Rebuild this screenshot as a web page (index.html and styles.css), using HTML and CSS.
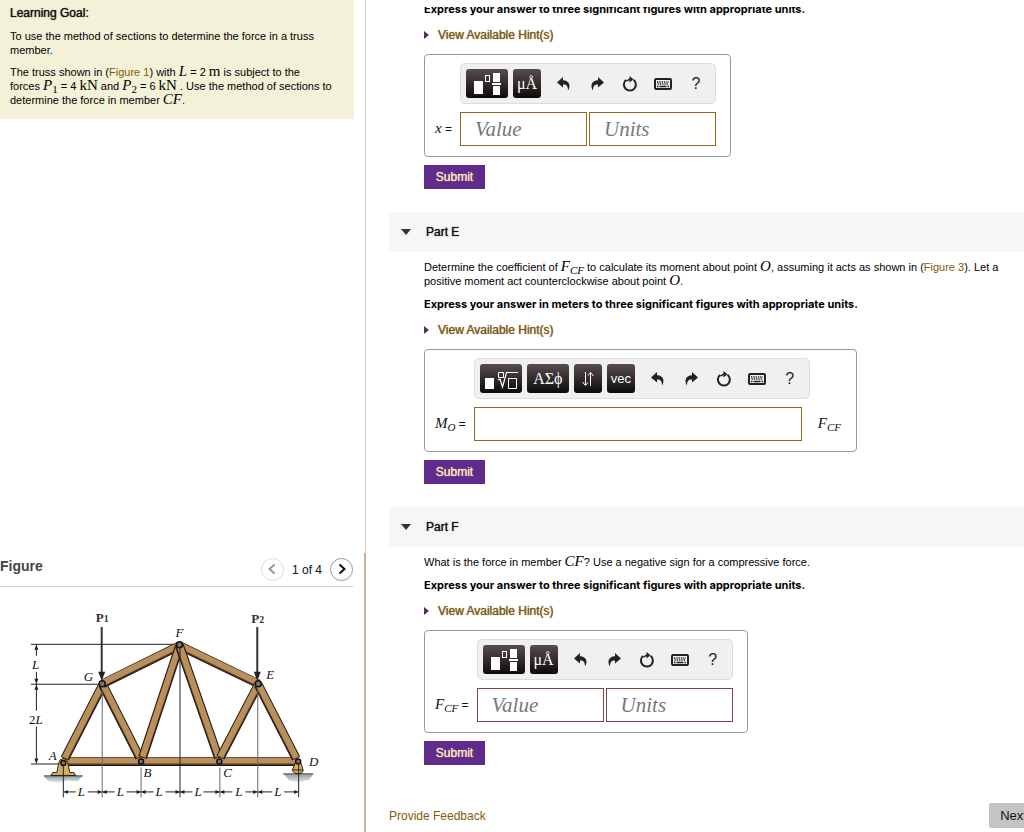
FILE: index.html
```html
<!DOCTYPE html>
<html lang="en">

<head>
  <meta charset="utf-8">
  <title>Method of Sections</title>
  <link rel="stylesheet" href="styles.css">
</head>

<body>
  <!-- Shared icons -->
  <svg class="icon-defs" aria-hidden="true">
    <symbol id="icon-undo" viewBox="0 0 14 14">
      <path d="M6 0L0 5.500L6 10.500V7.500C9.500 7.300 11 9 11 13.500C13.800 9.500 13 3.500 6 3.200Z"/>
    </symbol>
    <symbol id="icon-redo" viewBox="0 0 14 14">
      <path d="M8 0L14 5.500L8 10.500V7.500C4.500 7.300 3 9 3 13.500C0.200 9.500 1 3.500 8 3.200Z"/>
    </symbol>
    <symbol id="icon-reset" viewBox="0 0 16 16">
      <path d="M4 4A6 6 0 1 0 11.500 3.800" fill="none" stroke="currentColor" stroke-width="2"/>
      <path d="M3.500 4.800L7.500 2.500L7.500 0L11.500 3.200L7.500 6.500V4.300L5 5.500Z"/>
    </symbol>
    <symbol id="icon-keyboard" viewBox="0 0 18 12">
      <rect x="1" y="1" width="16" height="10" rx="1" fill="none" stroke="currentColor" stroke-width="2"/>
      <path d="M3 4H15M3.500 6H15" stroke="currentColor" stroke-width="1.300" stroke-dasharray="1.300 1"/>
      <path d="M3 8.500H4.500M5.500 8.500H12.500M13.500 8.500H15" stroke="currentColor" stroke-width="1.500"/>
    </symbol>
    <symbol id="icon-units-template" viewBox="0 0 28 24">
      <path d="M1 9H10V22H1ZM20 1H27V10H20ZM20 14H27V23H20ZM19 11H28V13H19Z"/>
      <rect x="12.500" y="3.500" width="4" height="6" fill="none" stroke="currentColor"/>
    </symbol>
    <symbol id="icon-root-template" viewBox="0 0 34 24">
      <path d="M1 11H10V22H1Z"/>
      <path d="M14.500 5.500H19.500V10.500H14.500ZM24.500 11.500H32.500V21.500H24.500Z" fill="none" stroke="currentColor"/>
      <path d="M14 13L16 12L18.500 20L22.500 5.500H34" fill="none" stroke="currentColor" stroke-width="1.200"/>
    </symbol>
    <symbol id="icon-arrows" viewBox="0 0 14 16">
      <path d="M4.500 1V14M1.500 11L4.500 14.500L7 11.500M9.500 15V2M7 4.500L9.500 1.500L12.500 5" fill="none" stroke="currentColor"/>
    </symbol>
  </svg>

  <div class="page">
    <aside class="sidebar">
      <section class="goal-pane">
        <div class="goal">
          <h2 class="goal-title">Learning Goal:</h2>
          <p>To use the method of sections to determine the force in a truss member.</p>
          <p>The truss shown in (<a href="#figure">Figure 1</a>) with <i class="math">L</i> = 2 <span class="math">m</span> is subject to the forces&nbsp;<i class="math">P</i><sub class="math">1</sub> = 4 <span class="math">kN</span> and <i class="math">P</i><sub class="math">2</sub> = 6 <span class="math">kN</span> . Use the method of sections to determine the force in member <i class="math">CF</i>.</p>
        </div>
      </section>

      <section class="figure-pane" id="figure">
        <div class="figure-bar">
          <h2>Figure</h2>
          <button class="round" disabled aria-label="Previous figure">
            <svg width="10" height="12" viewBox="0 0 10 12"><path d="M7.500 1.500L2.500 6L7.500 10.500"/></svg>
          </button>
          <span class="count">1 of 4</span>
          <button class="round" aria-label="Next figure">
            <svg width="10" height="12" viewBox="0 0 10 12"><path d="M2.500 1.500L7.500 6L2.500 10.500"/></svg>
          </button>
        </div>

        <svg class="truss" viewBox="0 587 354 245" role="img" aria-label="Truss with loads P1 and P2">
          <defs>
            <linearGradient id="ground" x1="0" y1="0" x2="0" y2="1">
              <stop offset="0" stop-color="#94a3a6"/>
              <stop offset="1" stop-color="#e6ebeb"/>
            </linearGradient>
            <path id="ad" d="M63 762H299"/>
            <path id="ag" d="M65 759L103 685"/>
            <path id="gb" d="M103 685L140 758"/>
            <path id="gf" d="M103 684L180 646"/>
            <path id="fb" d="M180 646L143 758"/>
            <path id="fe" d="M180 646L259 684"/>
            <path id="fc" d="M180 646L219 758"/>
            <path id="ec" d="M259 685L221 758"/>
            <path id="ed" d="M259 685L297 759"/>
          </defs>

          <!-- ground and dimension lines -->
          <path fill="url(#ground)" d="M44 777H82L78 782L68 781L61 783L49 782Z"/>
          <path fill="url(#ground)" d="M285 775H314L310 780L300 783L290 781Z"/>
          <path class="thin" d="M31 644.500H178M31 684.500H98M31 764.500H60M36.500 645V656M36.500 672V711M36.500 727V764"/>
          <path class="thin" d="M64 792.500H76M88 792.500H115M127 792.500H154M166 792.500H193M204 792.500H233M246 792.500H273M285 792.500H299"/>
          <path class="tips" d="M36.500 645l-2 5h4zM36.500 684l-2 -5h4zM36.500 685l-2 5h4zM36.500 764l-2 -5h4zM64 792.500l4 -2v4zM299 792.500l-4 -2v4z"/>
          <path class="tips" d="M98 790.500L102.500 792.500L98 794.500ZM107 790.500L102.500 792.500L107 794.500ZM137 790.500L141.500 792.500L137 794.500ZM146 790.500L141.500 792.500L146 794.500ZM176 790.500L180.500 792.500L176 794.500ZM185 790.500L180.500 792.500L185 794.500ZM216 790.500L220.500 792.500L216 794.500ZM225 790.500L220.500 792.500L225 794.500ZM254 790.500L258.500 792.500L254 794.500ZM263 790.500L258.500 792.500L263 794.500Z"/>

          <!-- members: outline, shaded underside, wood face -->
          <g class="member"><use href="#ad"/><use href="#ad"/><use href="#ad" y="-1"/></g>
          <g class="member"><use href="#ag"/><use href="#ag"/><use href="#ag" y="-1"/></g>
          <g class="member"><use href="#gb"/><use href="#gb"/><use href="#gb" y="-1"/></g>
          <g class="member"><use href="#gf"/><use href="#gf"/><use href="#gf" y="-1"/></g>
          <g class="member"><use href="#fe"/><use href="#fe"/><use href="#fe" y="-1"/></g>
          <g class="member"><use href="#fb"/><use href="#fb"/><use href="#fb" y="-1"/></g>
          <g class="member"><use href="#fc"/><use href="#fc"/><use href="#fc" y="-1"/></g>
          <g class="member"><use href="#ec"/><use href="#ec"/><use href="#ec" y="-1"/></g>
          <g class="member"><use href="#ed"/><use href="#ed"/><use href="#ed" y="-1"/></g>

          <!-- supports -->
          <path class="gold" d="M51 776L53 773H57L59 763Q60 759 63.500 759Q67 759 68 763L70 773H74L76 776Z"/>
          <path class="gold" d="M296 764Q299 757 302 764L304 771Q303 774.500 299 774.500Q295 774.500 293 771Z"/>
          <path class="thin" d="M44 776.500H83M284 774.500H314M294 770.500H304"/>
          <path class="thin gray" d="M102.500 690V798M258.500 690V798M141.500 768V798M220.500 768V798"/>
          <path class="thin" d="M63.500 766V798M180.500 646V798M299.500 764V798"/>
          <g class="pin">
            <circle cx="63.500" cy="763.500" r="2.500"/><circle cx="141.500" cy="762" r="2.500"/>
            <circle cx="220" cy="762" r="2.500"/><circle cx="299" cy="762" r="2.500"/>
            <circle cx="102.500" cy="684" r="3"/><circle cx="259" cy="684" r="3"/><circle cx="180" cy="645" r="3"/>
          </g>

          <!-- loads -->
          <path class="load" d="M102 627V674M258 627V674"/>
          <path class="tips" d="M98.500 672H105.500L102 681ZM254.500 672H261.500L258 681Z"/>

          <g class="force">
            <text x="96" y="622">P<tspan class="small">1</tspan></text>
            <text x="252" y="623">P<tspan class="small">2</tspan></text>
          </g>
          <g class="joint">
            <text x="176" y="637">F</text><text x="84" y="681">G</text><text x="267" y="679">E</text>
            <text x="49" y="761">A</text><text x="144" y="778">B</text><text x="224" y="778">C</text>
            <text x="310" y="767">D</text><text x="32" y="669">L</text>
            <text x="29" y="724"><tspan class="upright">2</tspan>L</text>
            <text x="78" y="797">L</text><text x="117" y="797">L</text><text x="156" y="797">L</text>
            <text x="195" y="797">L</text><text x="236" y="797">L</text><text x="275" y="797">L</text>
          </g>
        </svg>
      </section>
    </aside>

    <main class="content">
      <section class="part part-cut">
        <p class="ask">Express your answer to three significant figures with appropriate units.</p>
        <button class="hint">View Available Hint(s)</button>
        <form class="answer">
          <div class="toolbar">
            <button type="button" class="key wide" aria-label="Templates"><svg width="28" height="24"><use href="#icon-units-template"/></svg></button>
            <button type="button" class="key serif">μÅ</button>
            <button type="button" class="tool" aria-label="Undo"><svg width="14" height="14"><use href="#icon-undo"/></svg></button>
            <button type="button" class="tool" aria-label="Redo"><svg width="14" height="14"><use href="#icon-redo"/></svg></button>
            <button type="button" class="tool" aria-label="Reset"><svg width="16" height="16"><use href="#icon-reset"/></svg></button>
            <button type="button" class="tool" aria-label="Keyboard"><svg width="18" height="12"><use href="#icon-keyboard"/></svg></button>
            <button type="button" class="tool">?</button>
          </div>
          <label for="xValue"><i class="math">x</i> =</label>
          <div class="fields">
            <input type="text" id="xValue" placeholder="Value">
            <input type="text" placeholder="Units" aria-label="Units">
          </div>
        </form>
        <button class="submit">Submit</button>
      </section>

      <h2 class="part-title">Part E</h2>
      <section class="part">
        <p>Determine the coefficient of <i class="math">F</i><sub class="math"><i>CF</i></sub> to calculate its moment about point <i class="math">O</i>, assuming it acts as shown in (<a href="#figure">Figure 3</a>). Let a positive moment act counterclockwise about point <i class="math">O</i>.</p>
        <p class="ask">Express your answer in meters to three significant figures with appropriate units.</p>
        <button class="hint">View Available Hint(s)</button>
        <form class="answer">
          <div class="toolbar">
            <button type="button" class="key wide" aria-label="Templates"><svg width="34" height="24"><use href="#icon-root-template"/></svg></button>
            <button type="button" class="key wide serif">ΑΣϕ</button>
            <button type="button" class="key" aria-label="Arrows"><svg width="14" height="16"><use href="#icon-arrows"/></svg></button>
            <button type="button" class="key">vec</button>
            <button type="button" class="tool" aria-label="Undo"><svg width="14" height="14"><use href="#icon-undo"/></svg></button>
            <button type="button" class="tool" aria-label="Redo"><svg width="14" height="14"><use href="#icon-redo"/></svg></button>
            <button type="button" class="tool" aria-label="Reset"><svg width="16" height="16"><use href="#icon-reset"/></svg></button>
            <button type="button" class="tool" aria-label="Keyboard"><svg width="18" height="12"><use href="#icon-keyboard"/></svg></button>
            <button type="button" class="tool">?</button>
          </div>
          <label for="moment"><i class="math">M</i><sub class="math"><i>O</i></sub> =</label>
          <div class="fields single"><input type="text" id="moment"></div>
          <span class="suffix"><i class="math">F</i><sub class="math"><i>CF</i></sub></span>
        </form>
        <button class="submit">Submit</button>
      </section>

      <h2 class="part-title">Part F</h2>
      <section class="part">
        <p>What is the force in member <i class="math">CF</i>? Use a negative sign for a compressive force.</p>
        <p class="ask">Express your answer to three significant figures with appropriate units.</p>
        <button class="hint">View Available Hint(s)</button>
        <form class="answer">
          <div class="toolbar">
            <button type="button" class="key wide" aria-label="Templates"><svg width="28" height="24"><use href="#icon-units-template"/></svg></button>
            <button type="button" class="key serif">μÅ</button>
            <button type="button" class="tool" aria-label="Undo"><svg width="14" height="14"><use href="#icon-undo"/></svg></button>
            <button type="button" class="tool" aria-label="Redo"><svg width="14" height="14"><use href="#icon-redo"/></svg></button>
            <button type="button" class="tool" aria-label="Reset"><svg width="16" height="16"><use href="#icon-reset"/></svg></button>
            <button type="button" class="tool" aria-label="Keyboard"><svg width="18" height="12"><use href="#icon-keyboard"/></svg></button>
            <button type="button" class="tool">?</button>
          </div>
          <label for="force"><i class="math">F</i><sub class="math"><i>CF</i></sub> =</label>
          <div class="fields red">
            <input type="text" id="force" placeholder="Value">
            <input type="text" placeholder="Units" aria-label="Units">
          </div>
        </form>
        <button class="submit">Submit</button>
      </section>

      <footer class="bottom">
        <a href="#feedback">Provide Feedback</a>
        <button class="next">Next</button>
      </footer>
    </main>
  </div>
</body>

</html>
```
FILE: styles.css
```css
* {box-sizing: border-box;}

body {
  margin: 0;
  background: #fff;
  color: #111;
  font: 12px/14px "Liberation Sans", Arial, sans-serif;
}

h2, p {margin: 0;}
p {color: #000; font-size: 11px;}
a {color: #84590a; text-decoration: none;}

button {
  padding: 0;
  border: 0;
  background: none;
  color: inherit;
  font: inherit;
  cursor: pointer;
}

svg {display: block; fill: currentColor;}
.icon-defs {display: none;}

.page {
  display: flex;
  min-height: 100vh;
  overflow: hidden;
}

/* Left side */
.sidebar {
  display: flex;
  flex: 0 0 366px;
  flex-direction: column;
}

.goal-pane {
  flex: 1;
  padding-right: 11px;
  border-right: 1px solid #ddd0c8;
}

.goal {
  padding: 6px 10px 12px;
  background: #f3f2d9;
}

.goal p {margin-top: 8px;}
.goal-title + p {margin-top: 9px;}

.goal-title,
.part-title,
.hint {
  font-size: 12px;
  font-weight: normal;
  text-shadow: 0 0 1px currentColor;
}

.math {
  font-family: "Liberation Serif", serif;
  font-size: 15px;
  line-height: 0;
}

sub.math {
  font-size: 11px;
  vertical-align: -3px;
}

.figure-pane {
  padding: 0 11px 1px 0;
  border-right: 2px solid #cfae98;
}

.figure-bar {
  display: flex;
  align-items: center;
  height: 34px;
  border-bottom: 1px solid #ccc;
}

.figure-bar h2 {
  flex: 1;
  margin-bottom: 6px;
  color: #444;
  font-size: 14px;
  font-weight: bold;
}

.count {margin: 2px 8px 0;}

.round {
  display: flex;
  align-items: center;
  justify-content: center;
  width: 23px;
  height: 23px;
  border: 1px solid #999;
  border-radius: 50%;
}

.round:disabled {border-color: #ddd; color: #999;}

.round path {
  fill: none;
  stroke: currentColor;
  stroke-width: 2;
}

/* Truss drawing */
.truss {width: 100%;}
.thin {fill: none; stroke: #222;}
.gray {stroke: #666;}
.tips {fill: #222;}
.load {stroke: #333; stroke-width: 2;}
.member {fill: none; stroke: #1c1814; stroke-width: 9;}
.member use:nth-child(2) {stroke: #5a3826; stroke-width: 7;}
.member use:nth-child(3) {stroke: #ba905a; stroke-width: 6;}
.gold {fill: #d6ad5c; stroke: #2b2212;}
.pin {fill: #777; stroke: #111; stroke-width: 1.5;}

.force,
.joint {
  font-family: "Liberation Serif", serif;
  font-size: 13px;
}

.force {font-weight: bold; fill: #333;}
.force .small {font-size: 10px;}
.joint {font-style: italic;}
.joint .upright {font-style: normal;}

/* Right side */
.content {
  flex: 1;
  min-width: 0;
  padding: 7px 0 0 23px;
}

.part {padding: 8px 4px 23px 35px;}

.part .ask {
  margin-top: 9px;
  font-family: Inter, "Liberation Sans", sans-serif;
  font-weight: bold;
}

/* The first part is scrolled under the top edge */
.part-cut {padding-top: 0; overflow: hidden;}
.part-cut .ask {margin-top: -5px;}

.part-title {
  display: flex;
  align-items: center;
  gap: 15px;
  height: 40px;
  padding-left: 12px;
  background: #f6f6f6;
}

.part-title::before {
  border: 5px solid transparent;
  border-top: 6px solid #333;
  border-bottom: 0;
  content: "";
}

.hint {
  display: flex;
  align-items: center;
  gap: 9px;
  margin: 12px 0;
  color: #7c581b;
}

.hint::before {
  border: 4px solid transparent;
  border-right: 0;
  border-left: 5px solid #5b2c60;
  content: "";
}

.answer {
  display: inline-grid;
  grid-template-columns: auto auto auto;
  gap: 8px;
  align-items: center;
  padding: 8px 6px 10px 10px;
  border: 1px solid #999;
  border-radius: 4px;
  vertical-align: top;
}

.toolbar {
  display: flex;
  grid-column: 2;
  gap: 5px;
  align-items: center;
  height: 41px;
  padding: 0 5px;
  border: 1px solid #ddd;
  border-radius: 5px;
  background: #f0f0f0;
}

.key,
.tool {
  display: flex;
  align-items: center;
  justify-content: center;
  width: 28px;
  height: 29px;
}

.key {
  border-radius: 3px;
  background: linear-gradient(#5a4c4e, #0c0a0a);
  color: #fff;
  font-size: 13px;
}

.key.wide {width: 42px;}
.key.serif {font-family: "Liberation Serif", serif; font-size: 16px;}
.tool {color: #222; font-size: 16px;}
.key + .tool {margin-left: 4px;}

.answer label {
  grid-column: 1;
  white-space: nowrap;
}

.fields {display: flex; gap: 2px;}
.fields.single {margin-right: 8px;}
.suffix {padding-right: 9px;}

.fields input {
  flex: 1;
  width: 0;
  min-width: 0;
  height: 34px;
  padding: 0 14px;
  border: 1px solid #8b6b1c;
  font: italic 21px "Liberation Serif", serif;
}

.fields.red input {border-color: #7d4646;}
.fields input::placeholder {color: #777; opacity: 1;}

.submit {
  display: block;
  width: 61px;
  height: 24px;
  margin-top: 8px;
  background: #602c8b;
  color: #faeab4;
  text-shadow: 0 0 1px currentColor;
}

.bottom {
  display: flex;
  align-items: center;
  justify-content: space-between;
  margin: 15px -14px 4px 0;
}

.next {
  width: 49px;
  height: 25px;
  border-radius: 2px;
  background: #c4c4c4;
  color: #111;
  font-size: 13px;
}
```
